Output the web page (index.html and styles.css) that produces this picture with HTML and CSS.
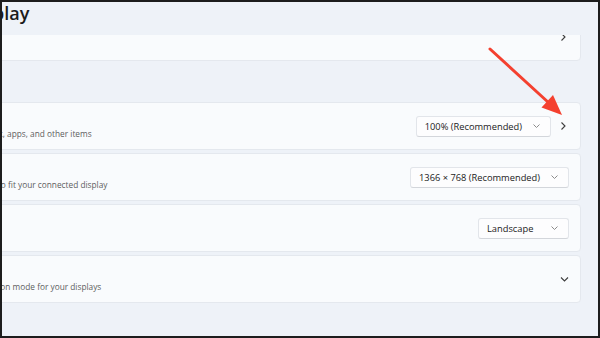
FILE: index.html
```html
<!DOCTYPE html>
<html lang="en">
<head>
  <meta charset="UTF-8">
  <meta name="viewport" content="width=device-width, initial-scale=1.0">
  <title>Display</title>
  <link rel="stylesheet" href="styles.css">
</head>
<body>
  <div class="window">
    <header class="header">
      <h1 class="title">Display</h1>
    </header>

    <div class="scroller">
      <div class="content">
        <!-- HDR link card, half scrolled under the header -->
        <div class="card card-first">
          <div class="card-text">
            <div class="card-title">HDR</div>
            <div class="card-desc">More about HDR</div>
          </div>
          <svg class="chevron" width="12" height="12" viewBox="0 0 12 12"><path d="M4.5 2.5 L8 6 L4.5 9.5"/></svg>
        </div>

        <div class="section">Scale &amp; layout</div>

        <div class="card">
          <div class="card-text">
            <div class="card-title">Scale</div>
            <div class="card-desc">Change the size of text, apps, and other items</div>
          </div>
          <div class="actions">
            <div class="select">
              <span>100% (Recommended)</span>
              <svg class="caret" width="7" height="4" viewBox="0 0 7 4"><path d="M0.5 0.5 L3.5 3.5 L6.5 0.5"/></svg>
            </div>
            <svg class="chevron" width="12" height="12" viewBox="0 0 12 12"><path d="M4.5 2.5 L8 6 L4.5 9.5"/></svg>
          </div>
        </div>

        <div class="card">
          <div class="card-text">
            <div class="card-title">Display resolution</div>
            <div class="card-desc">Adjust the resolution to fit your connected display</div>
          </div>
          <div class="select">
            <span>1366 × 768 (Recommended)</span>
            <svg class="caret" width="7" height="4" viewBox="0 0 7 4"><path d="M0.5 0.5 L3.5 3.5 L6.5 0.5"/></svg>
          </div>
        </div>

        <div class="card">
          <div class="card-text">
            <div class="card-title">Display orientation</div>
          </div>
          <div class="select">
            <span>Landscape</span>
            <svg class="caret" width="7" height="4" viewBox="0 0 7 4"><path d="M0.5 0.5 L3.5 3.5 L6.5 0.5"/></svg>
          </div>
        </div>

        <div class="card">
          <div class="card-text">
            <div class="card-title">Multiple displays</div>
            <div class="card-desc">Choose the presentation mode for your displays</div>
          </div>
          <svg class="chevron" width="12" height="12" viewBox="0 0 12 12"><path d="M4 4.5 L7.5 8 L11 4.5"/></svg>
        </div>
      </div>
    </div>

    <!-- red annotation arrow -->
    <svg class="arrow" width="600" height="338" viewBox="0 0 600 338">
      <line x1="490" y1="49" x2="549" y2="103"/>
      <polygon points="562,115 541.5,107.5 553,95"/>
    </svg>
  </div>
</body>
</html>
```

FILE: styles.css
```css
body {
  margin: 0;
  background-color: #1d1d1d;
  font-family: "Open Sans", "Noto Sans", sans-serif;
  color: #1b1b1b;
}
.window {
  position: relative;
  display: flex;
  flex-direction: column;
  width: 600px;
  height: 338px;
  box-sizing: border-box;
  border: 2px solid #1d1d1d;
  background-color: #eef2f8;
  overflow: hidden;
}
.header {
  flex: none;
  height: 33px;
}
.title {
  margin: 0 0 0 -36px;
  font-size: 18px;
  font-weight: 600;
  line-height: 22px;
  white-space: nowrap;
}
.scroller {
  flex: 1;
  overflow: hidden;
}
.content {
  display: flex;
  flex-direction: column;
  margin: -22px 17px 0 -104px;
}
.section {
  height: 42px;
  padding-left: 2px;
  display: flex;
  align-items: flex-end;
  padding-bottom: 6px;
  box-sizing: border-box;
  font-size: 9.3px;
  font-weight: 600;
}
.card {
  display: flex;
  align-items: center;
  justify-content: space-between;
  height: 48px;
  box-sizing: border-box;
  padding: 0 11px 0 16px;
  background-color: #f9fbfd;
  border: 1px solid #e4e8ee;
  border-radius: 4px;
}
.section + .card {
  margin-top: -1px;
}
.card + .card {
  margin-top: 3px;
}
.card-text {
  white-space: nowrap;
}
.card-title {
  font-size: 9.3px;
  line-height: 16px;
}
.card-desc {
  font-size: 8.3px;
  line-height: 12px;
  color: #5d5d5d;
}
.actions {
  display: flex;
  align-items: center;
  gap: 6px;
}
.select {
  display: flex;
  align-items: center;
  justify-content: space-between;
  gap: 11px;
  min-width: 91px;
  height: 21px;
  box-sizing: border-box;
  padding: 0 10px 0 8px;
  background-color: #fdfdfe;
  border: 1px solid #e2e5ea;
  border-bottom-color: #d3d6db;
  border-radius: 3px;
  font-size: 9.3px;
  white-space: nowrap;
}
.caret path {
  fill: none;
  stroke: #8c8c8c;
  stroke-width: 1;
}
.chevron path {
  fill: none;
  stroke: #3d3d3d;
  stroke-width: 1.1;
}
.arrow {
  position: absolute;
  left: -2px;
  top: -2px;
}
.arrow line {
  stroke: #f4402f;
  stroke-width: 3;
  stroke-linecap: round;
}
.arrow polygon {
  fill: #f4402f;
}
```
